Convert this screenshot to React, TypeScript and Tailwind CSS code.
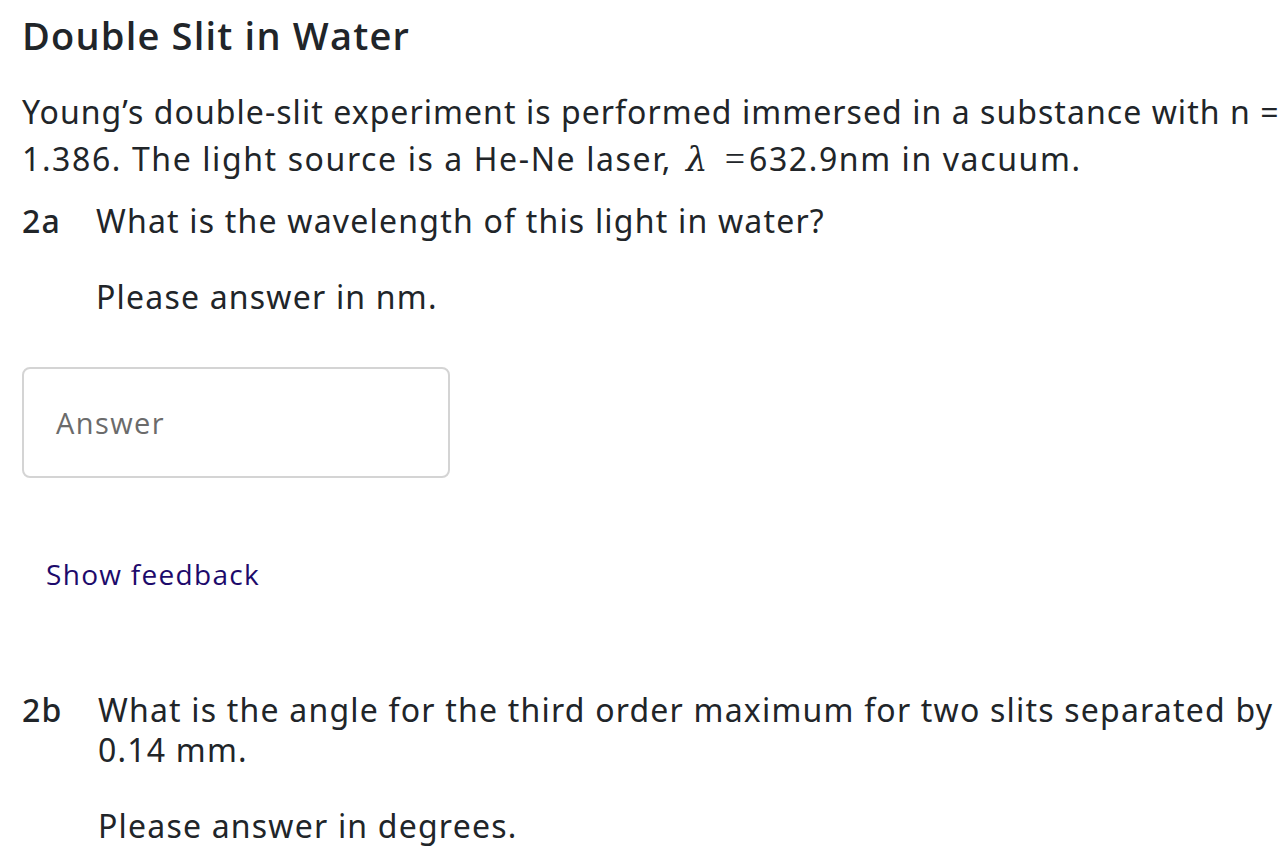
import React from "react";

export default function App() {
  return (
    <div className="min-h-screen bg-white text-[#212529] pl-[22px] pr-[4px]" style={{ fontFamily: "'Noto Sans', sans-serif" }}>
      <h1 className="pt-[12px] text-[38px] leading-[46px] font-semibold tracking-[1.2px]" style={{ fontFamily: "'Open Sans', sans-serif" }}>
        Double Slit in Water
      </h1>
      <p className="mt-[30px] text-[32px] leading-[47px] tracking-[1.05px]">
        Young’s double-slit experiment is performed immersed in a substance with n&nbsp;={" "}
        <span className="tracking-[1.6px]">1.386. The light source is a He-Ne laser,</span>
        <span style={{ fontFamily: "'DejaVu Serif', 'Liberation Serif', serif" }} className="italic text-[34px] ml-[14px] mr-[16px]">λ</span>
        <span style={{ fontFamily: "'Liberation Serif', serif" }} className="text-[36px] mr-[3px]">=</span>
        <span className="tracking-[1.6px]">632.9nm in vacuum.</span>
      </p>
      <div className="mt-[18px] flex text-[32px] leading-[40px] tracking-[1.2px]">
        <div className="w-[74px] shrink-0 font-medium">2a</div>
        <div>
          <div>What is the wavelength of this light in water?</div>
          <div className="mt-[36px]">Please answer in nm.</div>
        </div>
      </div>
      <div className="mt-[50px] w-[428px] h-[111px] rounded-[8px] border-2 border-[#d4d4d4] flex items-center pl-[32px]">
        <span className="text-[29px] tracking-[1.4px] text-[#6b6b6b]" style={{ fontFamily: "'Open Sans', sans-serif" }}>Answer</span>
      </div>
      <div className="mt-[80px] pl-[24px] text-[28px] leading-[32px] tracking-[1.3px] font-medium text-[#1d0a6b]" style={{ fontFamily: "'Open Sans', sans-serif" }}>
        Show feedback
      </div>
      <div className="mt-[100px] flex text-[32px] leading-[40px] tracking-[1.2px]">
        <div className="w-[76px] shrink-0 font-medium">2b</div>
        <div>
          <div>What is the angle for the third order maximum for two slits separated by 0.14 mm.</div>
          <div className="mt-[36px]">Please answer in degrees.</div>
        </div>
      </div>
    </div>
  );
}
